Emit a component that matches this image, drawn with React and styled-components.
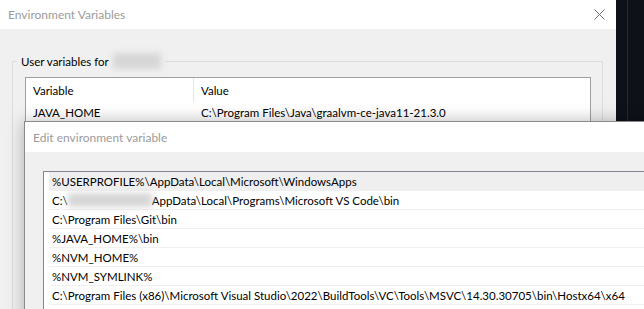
import React from 'react';
import styled, { createGlobalStyle } from 'styled-components';

const GlobalStyle = createGlobalStyle`
  html, body {
    margin: 0;
    padding: 0;
    background: #f0f0f0;
  }
  body {
    font-family: Lato, "Noto Sans", sans-serif;
    font-size: 11.5px;
    color: #000;
  }
`;

// the whole screenshot is a little desktop with two overlapping windows
const Desktop = styled.div`
  position: relative;
  width: 644px;
  height: 309px;
  overflow: hidden;
  display: flex;
`;

const Window = styled.div`
  width: 616px;
  height: 100%;
  display: flex;
  flex-direction: column;
  background: #f0f0f0;
`;

const DarkStrip = styled.div`
  flex: 1;
  background: #0f1119;
  display: flex;
  padding-left: 11px;
  & > div {
    width: 1px;
    background: #262a33;
  }
`;

const TitleBar = styled.div`
  height: ${(p) => p.$height}px;
  flex-shrink: 0;
  background: #fff;
  display: flex;
  align-items: center;
  justify-content: space-between;
  padding: 0 11px 0 8px;
  color: #9b9b9b;
  font-size: 12px;
`;

const CloseIcon = () => (
  <svg width="11" height="11" viewBox="0 0 11 11">
    <path d="M0.5 0.5 L10.5 10.5 M10.5 0.5 L0.5 10.5" stroke="#707070" strokeWidth="1" fill="none" />
  </svg>
);

const GroupBox = styled.div`
  margin: 32px 13px 0 12px;
  border: 1px solid #dcdcdc;
  border-bottom: none;
  padding: 0 11px 0 12px;
  flex: 1;
`;

const Legend = styled.div`
  margin: -11px 0 0 -8px;
  width: fit-content;
  height: 20px;
  display: flex;
  align-items: center;
  gap: 4px;
  background: #f0f0f0;
  padding: 0 4px;
`;

const Blurred = styled.span`
  display: inline-block;
  width: ${(p) => p.$w}px;
  height: ${(p) => p.$h}px;
  background: #d6d6d6;
  filter: blur(3px);
  vertical-align: middle;
`;

const ListView = styled.div`
  margin-top: 6px;
  border: 1px solid #a0a0a0;
  background: #fff;
  height: 200px;
`;

const HeaderRow = styled.div`
  display: grid;
  grid-template-columns: 168px 1fr;
  height: 24px;
  align-items: center;
`;

const HeaderCell = styled.div`
  padding-left: 7px;
  height: 100%;
  display: flex;
  align-items: center;
  border-right: ${(p) => (p.$divider ? '1px solid #e5e5e5' : 'none')};
`;

const DataRow = styled.div`
  display: grid;
  grid-template-columns: 168px 1fr;
  height: 20px;
  align-items: center;
  padding-left: 7px;
`;

const EditWindow = styled.div`
  position: absolute;
  left: 24px;
  top: 121px;
  width: 700px;
  height: 260px;
  border: 1px solid #8a8a8a;
  background: #f0f0f0;
  box-shadow: 0 0 16px rgba(0, 0, 0, 0.28);
  display: flex;
  flex-direction: column;
`;

const EditBody = styled.div`
  padding: 19px 0 0 18px;
`;

const PathList = styled.div`
  border-top: 1px solid #828790;
  border-left: 1px solid #828790;
  background: #fff;
`;

const PathRow = styled.div`
  height: 18px;
  border-bottom: 1px solid #f0f0f0;
  display: flex;
  align-items: center;
  margin-left: 5px;
  padding-left: 3px;
  white-space: nowrap;
  background: ${(p) => (p.$selected ? '#efefef' : '#fff')};
`;

const paths = [
  '%USERPROFILE%\\AppData\\Local\\Microsoft\\WindowsApps',
  null,
  'C:\\Program Files\\Git\\bin',
  '%JAVA_HOME%\\bin',
  '%NVM_HOME%',
  '%NVM_SYMLINK%',
  'C:\\Program Files (x86)\\Microsoft Visual Studio\\2022\\BuildTools\\VC\\Tools\\MSVC\\14.30.30705\\bin\\Hostx64\\x64',
  '',
];

export default function App() {
  return (
    <>
      <GlobalStyle />
      <Desktop>
        <Window>
          <TitleBar $height={29}>
            <span>Environment Variables</span>
            <CloseIcon />
          </TitleBar>
          <GroupBox>
            <Legend>
              User variables for <Blurred $w={48} $h={16} />
            </Legend>
            <ListView>
              <HeaderRow>
                <HeaderCell $divider>Variable</HeaderCell>
                <HeaderCell>Value</HeaderCell>
              </HeaderRow>
              <DataRow>
                <span>JAVA_HOME</span>
                <span>C:\Program Files\Java\graalvm-ce-java11-21.3.0</span>
              </DataRow>
            </ListView>
          </GroupBox>
        </Window>
        <DarkStrip>
          <div />
        </DarkStrip>

        <EditWindow>
          <TitleBar $height={30}>
            <span>Edit environment variable</span>
          </TitleBar>
          <EditBody>
            <PathList>
              {paths.map((p, i) => (
                <PathRow key={i} $selected={i === 0}>
                  {p === null ? (
                    <>
                      C:\<Blurred $w={84} $h={14} />AppData\Local\Programs\Microsoft VS Code\bin
                    </>
                  ) : (
                    p
                  )}
                </PathRow>
              ))}
            </PathList>
          </EditBody>
        </EditWindow>
      </Desktop>
    </>
  );
}
